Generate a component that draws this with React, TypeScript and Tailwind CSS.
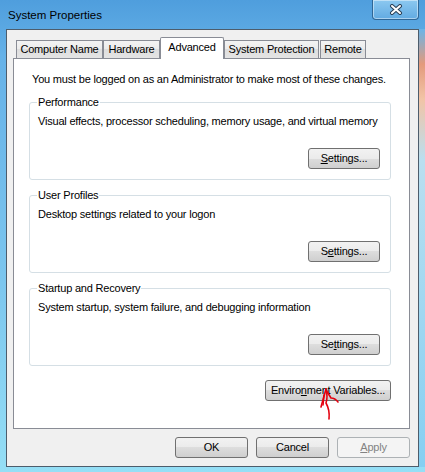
import React from "react";

const font = "font-['Liberation_Sans',Arial,sans-serif]";
const btn =
  "flex items-center justify-center h-[21px] rounded-[3px] border border-[#707070] bg-[linear-gradient(#f2f2f2,#ebebeb_50%,#dddddd_50%,#cfcfcf)] text-black";

function Group({
  title,
  desc,
  label,
}: {
  title: string;
  desc: string;
  label: React.ReactNode;
}) {
  return (
    <fieldset className="mt-[8px] ml-[15px] w-[362px] rounded-[3px] border border-[#d5dfe5] pl-[7px] pr-[10px] pb-[10px]">
      <legend className="px-[1px] leading-[15px]">{title}</legend>
      <p className="mt-[4px] pl-[1px] leading-[15px]">{desc}</p>
      <div className="mt-[19px] flex justify-end">
        <button className={`${btn} w-[72px]`}>{label}</button>
      </div>
    </fieldset>
  );
}

const tabs = ["Computer Name", "Hardware", "Advanced", "System Protection", "Remote"];
const tabW = ["w-[87px]", "w-[57px]", "w-[64px]", "w-[95px]", "w-[46px]"];

export default function App() {
  return (
    <div
      className={`${font} relative w-[425px] h-[472px] overflow-hidden text-[11px] tracking-[-0.2px] text-black bg-[linear-gradient(180deg,#4f9edd_0%,#66b2e8_12%,#7cc6ee_60%,#95dff6_100%)]`}
    >
      {/* title bar */}
      <div className="flex h-[29px] items-start">
        <div className="pl-[8px] pt-[7px] text-[11.5px] tracking-normal leading-[16px] text-black">
          System Properties
        </div>
        <div className="ml-auto mr-[6px] flex h-[20px] w-[47px] items-center justify-center rounded-b-[4px] border border-t-0 border-[#2f6797] bg-[linear-gradient(#8cc8f0,#62abe2)] shadow-[inset_0_0_0_1px_rgba(255,255,255,0.45)]">
          <svg width="14" height="11" viewBox="0 0 14 11">
            <path d="M3 2 L11 9 M11 2 L3 9" stroke="#2a3f55" strokeWidth="4" strokeLinecap="round" />
            <path d="M3 2 L11 9 M11 2 L3 9" stroke="#ffffff" strokeWidth="2" strokeLinecap="round" />
          </svg>
        </div>
      </div>

      <div className="flex">
        <div className="w-[6px]" />
        {/* client area */}
        <div className="h-[438px] w-[413px] border border-[#4d5d6c] bg-[#f0f0f0]">
          <div className="ml-[6px] w-[397px] pt-[7px]">
            <div className="relative z-10 -mb-px flex h-[22px] items-end pl-[3px]">
              {tabs.map((t, i) =>
                i === 2 ? (
                  <div
                    key={t}
                    className={`${tabW[i]} flex h-[22px] items-start justify-center rounded-t-[2px] border border-b-0 border-[#898c95] bg-white pt-[2px] leading-[15px]`}
                  >
                    {t}
                  </div>
                ) : (
                  <div
                    key={t}
                    className={`${tabW[i]} mb-px flex h-[18px] items-center justify-center border border-b-0 border-[#898c95] bg-[linear-gradient(#f3f3f3,#ebebeb_50%,#dedede_50%,#e4e4e4)] leading-[15px] ${i === 4 ? "ml-px" : ""}`}
                  >
                    {t}
                  </div>
                )
              )}
            </div>
            <div className="h-[371px] border border-[#898c95] bg-white">
              <p className="pl-[18px] pt-[13px] leading-[15px]">
                You must be logged on as an Administrator to make most of these changes.
              </p>
              <Group
                title="Performance"
                desc="Visual effects, processor scheduling, memory usage, and virtual memory"
                label={
                  <span>
                    <u>S</u>ettings...
                  </span>
                }
              />
              <Group
                title="User Profiles"
                desc="Desktop settings related to your logon"
                label={
                  <span>
                    S<u>e</u>ttings...
                  </span>
                }
              />
              <Group
                title="Startup and Recovery"
                desc="System startup, system failure, and debugging information"
                label={
                  <span>
                    Se<u>t</u>tings...
                  </span>
                }
              />
              <div className="mt-[14px] flex w-[377px] justify-end">
                <button className={`${btn} w-[126px]`}>
                  <span>
                    Enviro<u>n</u>ment Variables...
                  </span>
                </button>
              </div>
            </div>
            <div className="mt-[8px] flex justify-end gap-[8px]">
              <button className={`${btn} w-[73px]`}>OK</button>
              <button className={`${btn} w-[73px]`}>Cancel</button>
              <button className="flex h-[21px] w-[73px] items-center justify-center rounded-[3px] border border-[#adb2b5] bg-[#f4f4f4] text-[#838383]">
                <span>
                  <u>A</u>pply
                </span>
              </button>
            </div>
          </div>
        </div>
        <div className="h-[438px] flex-1 bg-[linear-gradient(180deg,#6ab4e8_0%,#e39a7c_8%,#f2c4a6_16%,#b9dff0_30%,#86cff2_100%)]" />
      </div>

      {/* hand-drawn annotation */}
      <svg
        className="pointer-events-none absolute left-[314px] top-[384px]"
        width="30"
        height="40"
        viewBox="314 384 30 40"
      >
        <g fill="none" stroke="#e4000f" strokeWidth="1.6" strokeLinecap="round" strokeLinejoin="round">
          <path d="M326 389 L321 407" />
          <path d="M326 389 Q328 397 326 403 Q330 410 329 419" />
          <path d="M326 390 L331 398 Q335 398 338 402" />
          <path d="M324 395 L323 405" />
        </g>
      </svg>
    </div>
  );
}
